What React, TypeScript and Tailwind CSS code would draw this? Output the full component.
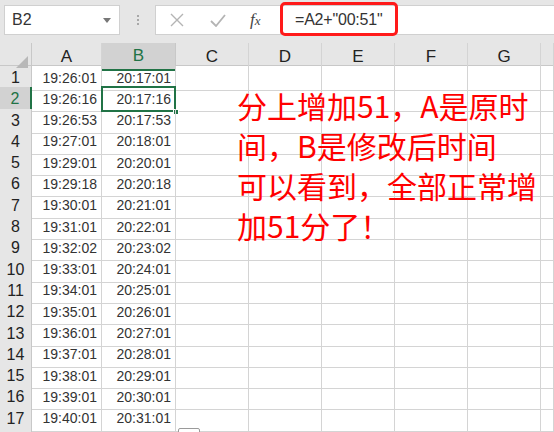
import React from "react";

// sheet columns share one grid template: row header, A..G, then a sliver of H
const GRID = "grid grid-cols-[32px_70px_74px_73px_73px_73px_73px_73px_1fr]";
const COLS = ["A", "B", "C", "D", "E", "F", "G", ""];

const ROWS: [string, string][] = [
  ["19:26:01", "20:17:01"],
  ["19:26:16", "20:17:16"],
  ["19:26:53", "20:17:53"],
  ["19:27:01", "20:18:01"],
  ["19:29:01", "20:20:01"],
  ["19:29:18", "20:20:18"],
  ["19:30:01", "20:21:01"],
  ["19:31:01", "20:22:01"],
  ["19:32:02", "20:23:02"],
  ["19:33:01", "20:24:01"],
  ["19:34:01", "20:25:01"],
  ["19:35:01", "20:26:01"],
  ["19:36:01", "20:27:01"],
  ["19:37:01", "20:28:01"],
  ["19:38:01", "20:29:01"],
  ["19:39:01", "20:30:01"],
  ["19:40:01", "20:31:01"],
];

function FormulaBar() {
  return (
    <div className="relative h-[43px] bg-[#e6e6e6] flex items-start pt-[5px] pl-[4px]">
      {/* name box */}
      <div className="w-[116px] h-[30px] bg-white border border-[#d0d0d0] flex items-center justify-between pl-[7px] pr-[8px]">
        <span className="text-[16px] text-[#333]">B2</span>
        <svg width="8" height="5" viewBox="0 0 8 5">
          <path d="M0 0 L8 0 L4 5 Z" fill="#777" />
        </svg>
      </div>
      {/* grip dots */}
      <div className="w-[35px] h-[30px] flex flex-col items-center justify-center gap-[2px]">
        <span className="w-[2px] h-[2px] bg-[#a8a8a8]" />
        <span className="w-[2px] h-[2px] bg-[#a8a8a8]" />
        <span className="w-[2px] h-[2px] bg-[#a8a8a8]" />
      </div>
      {/* cancel / enter / function */}
      <div className="w-[126px] h-[30px] bg-white border border-[#d0d0d0] flex items-center pl-[14px]">
        <svg width="14" height="14" viewBox="0 0 14 14">
          <path d="M1 1 L13 13 M13 1 L1 13" stroke="#b4b4b4" strokeWidth="1.4" />
        </svg>
        <svg className="ml-[26px]" width="16" height="13" viewBox="0 0 16 13">
          <path d="M1 7 L6 12 L15 1" stroke="#b4b4b4" strokeWidth="1.8" fill="none" />
        </svg>
        <span className="ml-[24px] text-[17px] italic text-[#444] font-['Liberation_Serif',serif]">
          f<span className="text-[13px]">x</span>
        </span>
      </div>
      {/* formula input */}
      <div className="flex-1 h-[30px] bg-white border-y border-[#d0d0d0] flex items-center pl-[14px]">
        <span className="text-[16px] text-[#333] tracking-[-0.2px]">=A2+"00:51"</span>
      </div>
      <div className="absolute left-[280px] top-[2px] w-[118px] h-[34px] border-[3px] border-[#ff1a1a] rounded-[5px]" />
    </div>
  );
}

function HeaderRow() {
  return (
    <div className={`${GRID} h-[23px] bg-[#e6e6e6] border-b border-[#c8c8c8]`}>
      <div className="relative border-r border-[#c8c8c8]">
        <svg className="absolute right-[3px] bottom-[3px]" width="12" height="12" viewBox="0 0 12 12">
          <path d="M12 0 L12 12 L0 12 Z" fill="#b8b8b8" />
        </svg>
      </div>
      {COLS.map((c, i) =>
        c === "B" ? (
          <div
            key={i}
            className="flex items-center justify-center bg-[#d2d2d2] border-r border-[#c8c8c8] border-b-2 border-b-[#217346] text-[#217346] text-[17px]"
          >
            {c}
          </div>
        ) : (
          <div key={i} className="flex items-center justify-center border-r border-[#d4d4d4] text-[#222] text-[17px]">
            {c}
          </div>
        )
      )}
    </div>
  );
}

function DataRow({ n, a, b }: { n: number; a: string; b: string }) {
  const active = n === 2;
  return (
    <div className={`${GRID} h-[21.3px]`}>
      <div
        className={
          active
            ? "flex items-center justify-center bg-[#d2d2d2] border-r-2 border-[#217346] border-b border-b-[#c8c8c8] text-[#217346] text-[16px]"
            : "flex items-center justify-center bg-[#e6e6e6] border-r border-b border-[#c8c8c8] text-[#222] text-[16px]"
        }
      >
        {n}
      </div>
      <div className="flex items-center justify-end pr-[4px] border-r border-b border-[#d4d4d4] text-[14px] text-[#333]">
        {a}
      </div>
      <div className="relative flex items-center justify-end pr-[4px] border-r border-b border-[#d4d4d4] text-[14px] text-[#333]">
        {b}
        {active && (
          <>
            <div className="absolute -left-[1px] -top-[1px] -right-[1px] -bottom-[1px] border-2 border-[#217346]" />
            <div className="absolute -right-[4px] -bottom-[4px] w-[6px] h-[6px] bg-[#217346] border border-white" />
          </>
        )}
      </div>
      {COLS.slice(2).map((_, i) => (
        <div key={i} className="border-r border-b border-[#d4d4d4]" />
      ))}
    </div>
  );
}

export default function App() {
  return (
    <div className="w-[554px] h-[432px] overflow-hidden bg-white font-['Liberation_Sans','Noto_Sans_CJK_SC',sans-serif]">
      <FormulaBar />
      <div className="relative">
        <HeaderRow />
        {ROWS.map(([a, b], i) => (
          <DataRow key={i} n={i + 1} a={a} b={b} />
        ))}
        <div className={`${GRID} h-[21px]`}>
          <div className="bg-[#e6e6e6] border-r border-[#c8c8c8]" />
          {COLS.map((_, i) => (
            <div key={i} className="border-r border-[#d4d4d4]" />
          ))}
        </div>

        {/* paste options tag under the filled range */}
        <div className="absolute left-[178px] top-[385px] w-[22px] h-[16px] bg-white border border-[#9a9a9a] rounded-[2px]">
          <div className="mx-auto mt-[3px] w-[12px] h-[1px] bg-[#888]" />
        </div>

        {/* note box */}
        <div className="absolute left-[237px] top-[42px] text-[30px] leading-[40px] text-[#ff0000] whitespace-nowrap font-['Noto_Sans_CJK_SC',sans-serif]">
          <div>分上增加51，A是原时</div>
          <div>间，B是修改后时间</div>
          <div>可以看到，全部正常增</div>
          <div>加51分了！</div>
        </div>
      </div>
    </div>
  );
}
